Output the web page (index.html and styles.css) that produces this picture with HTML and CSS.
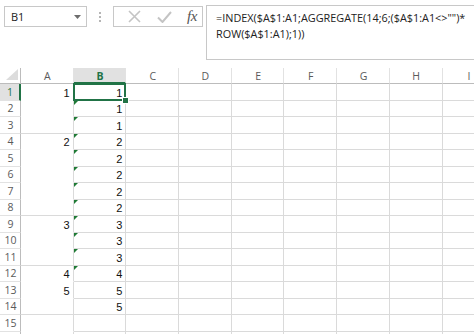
FILE: index.html
```html
<!DOCTYPE html>
<html>
<head>
<meta charset="utf-8">
<link rel="stylesheet" href="styles.css">
</head>
<body>
<div class="fbar">
  <div class="namebox"><span>B1</span><svg width="7" height="4" viewBox="0 0 7 4"><path d="M0 0H7L3.5 4Z" fill="#6d6d6d"/></svg></div>
  <div class="grip"><svg width="2" height="10" viewBox="0 0 2 10"><rect x="0" y="0" width="2" height="2" fill="#b5b5b5"/><rect x="0" y="4" width="2" height="2" fill="#b5b5b5"/><rect x="0" y="8" width="2" height="2" fill="#b5b5b5"/></svg></div>
  <div class="btns">
    <svg class="ic" width="13" height="13" viewBox="0 0 13 13"><path d="M1 1L12 12M12 1L1 12" stroke="#c4c4c4" stroke-width="1.6" fill="none"/></svg>
    <svg class="ic" width="15" height="12" viewBox="0 0 15 12"><path d="M1 6.5L5.5 11L14 1" stroke="#c4c4c4" stroke-width="2" fill="none"/></svg>
    <span class="fx">fx</span>
  </div>
  <div class="formula"><span>=INDEX($A$1:A1;AGGREGATE(14;6;($A$1:A1&lt;&gt;"")*</span><span>ROW($A$1:A1);1))</span></div>
</div>
<div class="sheet">
  <div class="row hdr"><b class="corner"><svg width="12" height="11" viewBox="0 0 12 11"><path d="M12 0V11H0Z" fill="#dcdcdc"/></svg></b><b>A</b><b class="on">B</b><b>C</b><b>D</b><b>E</b><b>F</b><b>G</b><b>H</b><b>I</b></div>
  <div class="row"><b class="on">1</b><i class="a">1</i><i class="b sel">1</i><i></i><i></i><i></i><i></i><i></i><i></i><i></i></div>
  <div class="row"><b>2</b><i class="a"></i><i class="b t">1</i><i></i><i></i><i></i><i></i><i></i><i></i><i></i></div>
  <div class="row"><b>3</b><i class="a ln"></i><i class="b t">1</i><i></i><i></i><i></i><i></i><i></i><i></i><i></i></div>
  <div class="row"><b>4</b><i class="a">2</i><i class="b t">2</i><i></i><i></i><i></i><i></i><i></i><i></i><i></i></div>
  <div class="row"><b>5</b><i class="a"></i><i class="b t">2</i><i></i><i></i><i></i><i></i><i></i><i></i><i></i></div>
  <div class="row"><b>6</b><i class="a"></i><i class="b t">2</i><i></i><i></i><i></i><i></i><i></i><i></i><i></i></div>
  <div class="row"><b>7</b><i class="a"></i><i class="b t">2</i><i></i><i></i><i></i><i></i><i></i><i></i><i></i></div>
  <div class="row"><b>8</b><i class="a ln"></i><i class="b t">2</i><i></i><i></i><i></i><i></i><i></i><i></i><i></i></div>
  <div class="row"><b>9</b><i class="a">3</i><i class="b t">3</i><i></i><i></i><i></i><i></i><i></i><i></i><i></i></div>
  <div class="row"><b>10</b><i class="a"></i><i class="b t">3</i><i></i><i></i><i></i><i></i><i></i><i></i><i></i></div>
  <div class="row"><b>11</b><i class="a ln"></i><i class="b t">3</i><i></i><i></i><i></i><i></i><i></i><i></i><i></i></div>
  <div class="row"><b>12</b><i class="a">4</i><i class="b t">4</i><i></i><i></i><i></i><i></i><i></i><i></i><i></i></div>
  <div class="row"><b>13</b><i class="a">5</i><i class="b">5</i><i></i><i></i><i></i><i></i><i></i><i></i><i></i></div>
  <div class="row"><b>14</b><i class="a ln"></i><i class="b">5</i><i></i><i></i><i></i><i></i><i></i><i></i><i></i></div>
  <div class="row"><b>15</b><i class="a"></i><i class="b"></i><i></i><i></i><i></i><i></i><i></i><i></i><i></i></div>
  <div class="row"><b></b><i class="a"></i><i class="b"></i><i></i><i></i><i></i><i></i><i></i><i></i><i></i></div>
</div>
</body>
</html>
```
FILE: styles.css
```css
html, body {
  margin: 0;
  padding: 0;
  background: #fff;
}
body {
  width: 474px;
  height: 334px;
  overflow: hidden;
  font-family: "Liberation Sans", Arial, sans-serif;
}
.fbar {
  display: flex;
  align-items: flex-start;
  height: 68px;
  padding-top: 5px;
  box-sizing: border-box;
}
.fbar > * {
  flex: none;
}
.namebox {
  margin: 1px 0 0 4px;
  width: 83px;
  height: 21px;
  border: 1px solid #c8c8c8;
  box-sizing: border-box;
  display: flex;
  align-items: center;
  justify-content: space-between;
  padding: 0 5px 0 6px;
  font: 11px "Open Sans", sans-serif;
  color: #222;
}
.grip {
  width: 26px;
  height: 23px;
  display: flex;
  align-items: center;
  justify-content: center;
}
.btns {
  margin-top: 1px;
  width: 90px;
  height: 21px;
  border: 1px solid #c8c8c8;
  box-sizing: border-box;
  display: flex;
  align-items: center;
  padding-left: 14px;
  gap: 16px;
}
.fx {
  font: italic 15px "Liberation Serif", serif;
  color: #555;
  margin-left: -1px;
  letter-spacing: -0.5px;
}
.formula {
  margin-left: 3px;
  width: 280px;
  height: 55px;
  border: 1px solid #c8c8c8;
  border-right: none;
  box-sizing: border-box;
  padding: 4px 0 0 9px;
  display: flex;
  flex-direction: column;
  font: 10.85px "Open Sans", sans-serif;
  line-height: 16px;
  color: #222;
  white-space: nowrap;
}
.sheet {
  display: flex;
  flex-direction: column;
}
.row {
  display: grid;
  grid-template-columns: 21px repeat(9, 52.7px);
  height: 16.5px;
}
.row.hdr {
  height: 16px;
}
.row b, .row i {
  font-style: normal;
  font-weight: normal;
  box-sizing: border-box;
  overflow: hidden;
}
.row b {
  font: 10.5px "Open Sans", sans-serif;
  color: #5a5a5a;
  display: flex;
  align-items: center;
  justify-content: center;
  border-right: 1px solid #bcbcbc;
  border-bottom: 1px solid #e2e2e2;
  padding-left: 1px;
}
.hdr b {
  border-right: 1px solid #e2e2e2;
  border-bottom: 1px solid #bcbcbc;
  padding-top: 1px;
}
.hdr b.corner {
  border-right: 1px solid #bcbcbc;
  justify-content: flex-end;
  align-items: flex-end;
  padding: 0 2px 3px 0;
}
.row b.on {
  background: #e1e1e1;
  color: #217346;
  border-right: 2px solid #217346;
}
.hdr b.on {
  border-right: 1px solid #e2e2e2;
  border-bottom: 2px solid #217346;
  font-weight: bold;
}
.row i {
  display: flex;
  align-items: flex-end;
  justify-content: flex-end;
  padding: 0 3px 1px 0;
  font-size: 11px;
  color: #111;
  border-right: 1px solid #dadada;
  border-bottom: 1px solid #dadada;
  position: relative;
}
.row i.a {
  border-bottom-color: transparent;
}
.row i.a.ln {
  border-bottom-color: #dadada;
}
.row i.t::before {
  content: "";
  position: absolute;
  left: 0;
  top: 0;
  border-top: 4px solid #1f7a35;
  border-right: 4px solid transparent;
}
.row i.sel {
  overflow: visible;
}
.row i.sel::after {
  content: "";
  position: absolute;
  left: -1px;
  top: -1px;
  right: -1px;
  bottom: -1px;
  border: 2px solid #217346;
}
.row i.sel::before {
  content: "";
  position: absolute;
  right: -4px;
  bottom: -4px;
  width: 5px;
  height: 5px;
  background: #217346;
  border: 1px solid #fff;
  z-index: 2;
}
```
